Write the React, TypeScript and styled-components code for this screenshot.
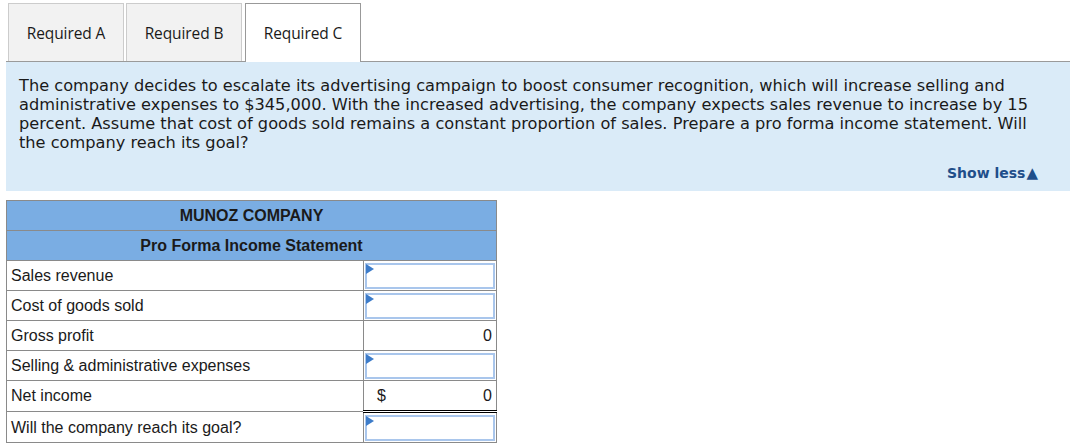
import React from "react";
import styled, { createGlobalStyle } from "styled-components";

const GlobalStyle = createGlobalStyle`
  body {
    margin: 0;
    background: #ffffff;
    font-family: "Liberation Sans", Arial, sans-serif;
  }
`;

type Row = {
  label: string;
  kind: "input" | "value";
  value?: string;
  dollar?: boolean;
  topRule?: boolean;
  doubleRule?: boolean;
  tall?: boolean;
};

const rows: Row[] = [
  { label: "Sales revenue", kind: "input" },
  { label: "Cost of goods sold", kind: "input" },
  { label: "Gross profit", kind: "value", value: "0", topRule: true },
  { label: "Selling & administrative expenses", kind: "input" },
  { label: "Net income", kind: "value", value: "0", dollar: true, topRule: true, doubleRule: true },
  { label: "Will the company reach its goal?", kind: "input", tall: true },
];

const App = () => {
  return (
    <Page>
      <GlobalStyle />
      <Tabs>
        <Tab>Required A</Tab>
        <Tab>Required B</Tab>
        <Tab $active>Required C</Tab>
      </Tabs>
      <Prompt>
        <p>
          The company decides to escalate its advertising campaign to boost consumer recognition, which will increase
          selling and administrative expenses to $345,000. With the increased advertising, the company expects sales
          revenue to increase by 15 percent. Assume that cost of goods sold remains a constant proportion of sales.
          Prepare a pro forma income statement. Will the company reach its goal?
        </p>
        <ShowLess>
          Show less<Caret>▲</Caret>
        </ShowLess>
      </Prompt>
      <Statement>
        <tbody>
          <tr>
            <HeadCell colSpan={2}>MUNOZ COMPANY</HeadCell>
          </tr>
          <tr>
            <HeadCell colSpan={2}>Pro Forma Income Statement</HeadCell>
          </tr>
          {rows.map((r) => (
            <tr key={r.label}>
              <LabelCell $tall={r.tall}>{r.label}</LabelCell>
              <ValueCell $topRule={r.topRule} $doubleRule={r.doubleRule}>
                {r.kind === "input" ? (
                  <InputBox>
                    <Flag />
                  </InputBox>
                ) : (
                  <Amount>
                    <span>{r.dollar ? "$" : ""}</span>
                    <span>{r.value}</span>
                  </Amount>
                )}
              </ValueCell>
            </tr>
          ))}
        </tbody>
      </Statement>
    </Page>
  );
};

export default App;

const Page = styled.div`
  width: 1086px;
  height: 445px;
  padding: 3px 16px 0 6px;
  box-sizing: border-box;
  overflow: hidden;
`;

const Tabs = styled.div`
  display: flex;
  gap: 2px;
  padding-left: 2px;
  border-bottom: 1px solid #9a9a9a;
  height: 58px;
`;

const Tab = styled.div<{ $active?: boolean }>`
  width: 116px;
  box-sizing: border-box;
  display: flex;
  align-items: center;
  justify-content: center;
  font-family: "Open Sans", "Noto Sans", sans-serif;
  font-size: 15.5px;
  letter-spacing: -0.1px;
  color: #1a1a1a;
  background: ${(p) => (p.$active ? "#ffffff" : "#f2f2f2")};
  border: 1px solid ${(p) => (p.$active ? "#999999" : "#cccccc")};
  border-bottom: none;
  margin-left: ${(p) => (p.$active ? "1px" : "0")};
  margin-bottom: ${(p) => (p.$active ? "-1px" : "0")};
  height: ${(p) => (p.$active ? "59px" : "58px")};
`;

const Prompt = styled.div`
  background: #daebf8;
  height: 129px;
  padding: 14px 12px 0 13px;
  box-sizing: border-box;
  p {
    margin: 0;
    font-family: "DejaVu Sans", Verdana, sans-serif;
    font-size: 16.2px;
    line-height: 19px;
    color: #1a1a1a;
  }
`;

const ShowLess = styled.div`
  display: flex;
  justify-content: flex-end;
  align-items: center;
  margin-top: 12px;
  padding-right: 20px;
  font-family: "DejaVu Sans", Verdana, sans-serif;
  font-weight: bold;
  font-size: 14px;
  color: #1f4e8a;
`;

const Caret = styled.span`
  font-size: 15px;
  margin-left: 1px;
`;

const Statement = styled.table`
  margin-top: 9px;
  width: 491px;
  border-collapse: collapse;
  font-size: 16px;
  color: #1a1a1a;
`;

const HeadCell = styled.td`
  background: #7aade3;
  border: 1px solid #8a8a8a;
  height: 29px;
  padding: 0;
  text-align: center;
  font-weight: bold;
  font-size: 16px;
`;

const LabelCell = styled.td<{ $tall?: boolean }>`
  border: 1px solid #8a8a8a;
  height: 29px;
  padding: ${(p) => (p.$tall ? "1px 4px 0" : "0 4px")};
  width: 348px;
`;

const ValueCell = styled.td<{ $topRule?: boolean; $doubleRule?: boolean }>`
  border: 1px solid #8a8a8a;
  border-top: 1px solid ${(p) => (p.$topRule ? "#000000" : "#8a8a8a")};
  border-bottom: ${(p) => (p.$doubleRule ? "3px double #000000" : "1px solid #8a8a8a")};
  padding: 0;
  height: 29px;
`;

const InputBox = styled.div`
  position: relative;
  margin: 1px;
  height: 26px;
  border: 2px solid #a9c6ec;
  box-sizing: border-box;
  background: #ffffff;
`;

const Flag = styled.span`
  position: absolute;
  left: -1px;
  top: -1px;
  width: 0;
  height: 0;
  border-top: 5px solid transparent;
  border-bottom: 5px solid transparent;
  border-left: 8px solid #3d7cc9;
`;

const Amount = styled.div`
  display: flex;
  justify-content: space-between;
  padding: 0 4px 0 13px;
`;
